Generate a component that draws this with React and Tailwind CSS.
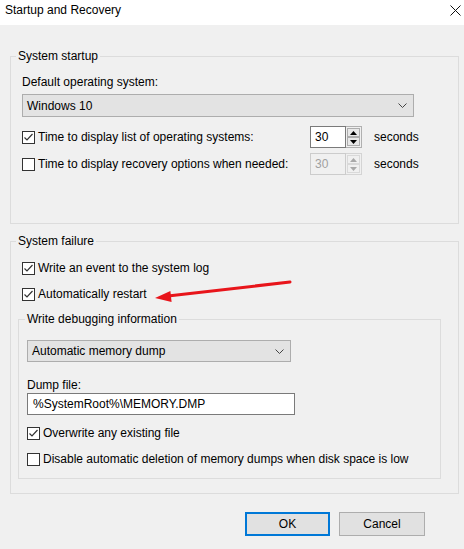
import React from 'react';

const Check = ({ checked, label, className = '' }) => (
  <label className={`flex items-center h-[16px] ${className}`}>
    <span className="w-[13px] h-[13px] border border-[#333333] bg-white flex items-center justify-center shrink-0">
      {checked && (
        <svg width="11" height="11" viewBox="0 0 11 11">
          <path d="M1.5 5.5 L4 8 L9.5 2" fill="none" stroke="#333333" strokeWidth="1.2" />
        </svg>
      )}
    </span>
    <span className="ml-[3px] whitespace-nowrap">{label}</span>
  </label>
);

const Arrow = ({ up, color }) => (
  <svg width="7" height="4" viewBox="0 0 7 4">
    <path d={up ? 'M0 4 L3.5 0 L7 4 Z' : 'M0 0 L3.5 4 L7 0 Z'} fill={color} />
  </svg>
);

const Spinner = ({ disabled }) => {
  const c = disabled ? '#a8a8a8' : '#000000';
  return (
    <div className="flex w-[52px] h-[22px]">
      <div
        className={`w-[36px] border pl-[4px] leading-[20px] ${
          disabled ? 'border-[#cccccc] bg-[#f0f0f0] text-[#a0a0a0]' : 'border-[#7a7a7a] bg-white'
        }`}
      >
        30
      </div>
      <div
        className={`flex flex-col justify-between w-[16px] border-y border-r p-[1px] ${
          disabled ? 'border-[#d4d4d4]' : 'border-[#b0b0b0]'
        }`}
      >
        <div
          className={`h-[9px] flex items-center justify-center border ${
            disabled ? 'border-[#d9d9d9] bg-[#f0f0f0]' : 'border-[#adadad] bg-[#e8e8e8]'
          }`}
        >
          <Arrow up color={c} />
        </div>
        <div
          className={`h-[9px] flex items-center justify-center border ${
            disabled ? 'border-[#d9d9d9] bg-[#f0f0f0]' : 'border-[#adadad] bg-[#e8e8e8]'
          }`}
        >
          <Arrow color={c} />
        </div>
      </div>
    </div>
  );
};

const Chevron = () => (
  <svg width="9" height="5" viewBox="0 0 9 5">
    <path d="M0.5 0.5 L4.5 4.5 L8.5 0.5" fill="none" stroke="#444444" strokeWidth="1" />
  </svg>
);

const Select = ({ value, className = '' }) => (
  <div
    className={`flex items-center justify-between border border-[#adadad] bg-[#e3e3e3] pl-[4px] pr-[6px] ${className}`}
  >
    <span>{value}</span>
    <Chevron />
  </div>
);

export default function App() {
  return (
    <div className="relative w-[464px] h-[549px] overflow-hidden bg-[#f0f0f0] text-black text-[12px] leading-[16px] font-['Liberation_Sans',Arial,sans-serif]">
      {/* title bar */}
      <div className="h-[25px] bg-white flex items-start justify-between pl-[5px] pr-[3px] pt-[2px]">
        <span>Startup and Recovery</span>
        <svg width="11" height="11" viewBox="0 0 11 11" className="mt-[3px]">
          <path d="M0.5 0.5 L10.5 10.5 M10.5 0.5 L0.5 10.5" stroke="#111111" strokeWidth="1" />
        </svg>
      </div>

      <div className="pl-[10px]">
        {/* System startup */}
        <fieldset className="mt-[23px] w-[449px] border border-[#dcdcdc] pl-[11px] pt-[10px] pb-[48px]">
          <legend className="-ml-[6px] px-[2px] leading-[16px]">System startup</legend>
          <div>Default operating system:</div>
          <Select value="Windows 10" className="mt-[4px] w-[392px] h-[23px]" />
          <div className="flex items-center mt-[9px]">
            <Check checked label="Time to display list of operating systems:" className="w-[288px]" />
            <Spinner />
            <span className="ml-[12px]">seconds</span>
          </div>
          <div className="flex items-center mt-[5px]">
            <Check label="Time to display recovery options when needed:" className="w-[288px]" />
            <Spinner disabled />
            <span className="ml-[12px]">seconds</span>
          </div>
        </fieldset>

        {/* System failure */}
        <fieldset className="mt-[9px] w-[449px] border border-[#dcdcdc] pl-[11px] pt-[11px] pb-[14px]">
          <legend className="-ml-[6px] px-[2px] leading-[16px]">System failure</legend>
          <Check checked label="Write an event to the system log" />
          <Check checked label="Automatically restart" className="mt-[10px]" />

          <fieldset className="mt-[9px] -ml-[4px] w-[423px] border border-[#dcdcdc] pl-[8px] pt-[13px] pb-[11px]">
            <legend className="-ml-[2px] px-[2px] leading-[16px]">Write debugging information</legend>
            <Select value="Automatic memory dump" className="w-[264px] h-[22px]" />
            <div className="mt-[16px] leading-[15px]">Dump file:</div>
            <div className="w-[268px] h-[22px] border border-[#7a7a7a] bg-white pl-[5px] leading-[20px]">
              %SystemRoot%\MEMORY.DMP
            </div>
            <Check checked label="Overwrite any existing file" className="mt-[10px]" />
            <Check
              label="Disable automatic deletion of memory dumps when disk space is low"
              className="mt-[10px]"
            />
          </fieldset>
        </fieldset>
      </div>

      {/* buttons */}
      <div className="flex justify-end gap-[9px] pr-[39px] mt-[18px]">
        <button className="w-[85px] h-[24px] border-2 border-[#0078d7] bg-[#e1e1e1]">OK</button>
        <button className="w-[86px] h-[24px] border border-[#adadad] bg-[#e1e1e1]">Cancel</button>
      </div>

      {/* annotation arrow */}
      <svg className="absolute left-0 top-0 pointer-events-none" width="464" height="549" viewBox="0 0 464 549">
        <path d="M290 282 L168 296" stroke="#e8151b" strokeWidth="3" strokeLinecap="round" />
        <path d="M155 298 L171.6 302 L170.4 291 Z" fill="#e8151b" />
      </svg>
    </div>
  );
}
